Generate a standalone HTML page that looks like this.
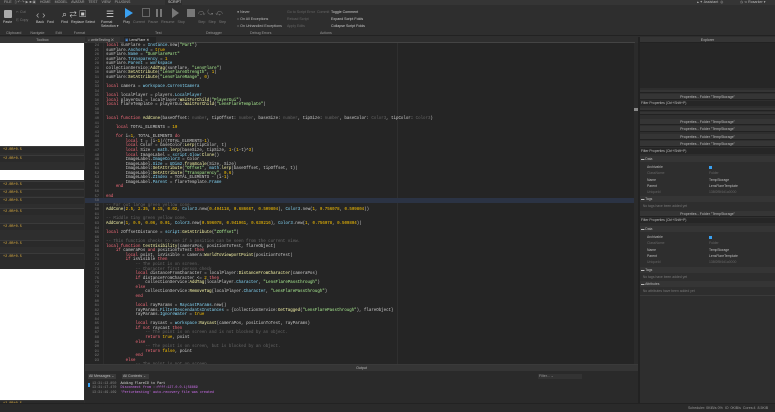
<!DOCTYPE html>
<html><head><meta charset="utf-8"><style>
*{margin:0;padding:0;box-sizing:border-box}
body{width:775px;height:412px;overflow:hidden;background:#2e2e2e;font-family:"Liberation Sans",sans-serif;color:#ccc;position:relative}
.a{position:absolute}
.t{font-size:3.6px;white-space:nowrap}
#code{position:absolute;left:106px;top:44px;font-family:"Liberation Mono",monospace;font-size:4.1px;line-height:4.56px;white-space:pre;color:#ccc}
#ln{position:absolute;left:87px;top:44px;font-family:"Liberation Mono",monospace;font-size:3.6px;line-height:4.56px;white-space:pre;color:#777;text-align:right;width:12px}
.k{color:#f86d7c}.s{color:#adf195}.n{color:#ffc600}.b{color:#84d6f7}.c{color:#666}.m{color:#fdfbac}
.row{position:absolute;left:0;width:84px;height:7px;background:#2a2a2a;border-top:1px solid #3a3a3a}
.row span{position:absolute;left:3px;top:1px;font-size:3.5px;color:#e0b040;font-family:"Liberation Mono",monospace}
.ph{position:absolute;left:640px;width:135px;height:6px;background:#353535;border-bottom:1px solid #222;font-size:3.6px;text-align:center;line-height:6px;color:#bbb}
.pr{position:absolute;left:640px;width:135px;font-size:3.4px;color:#bbb}
</style></head><body>
<div class="a" style="left:0;top:0;width:775px;height:5px;background:#353535"></div>
<div class="a t" style="left:4px;top:0;color:#aaa">FILE &nbsp; ▯ ↶ ↷ ▶ ■ ▣ &nbsp;&nbsp; HOME &nbsp;&nbsp; MODEL &nbsp;&nbsp; AVATAR &nbsp;&nbsp; TEST &nbsp;&nbsp; VIEW &nbsp;&nbsp; PLUGINS</div>
<div class="a" style="left:165px;top:0;width:17px;height:5px;background:#2e2e2e"></div>
<div class="a t" style="left:168px;top:0;color:#ddd">SCRIPT</div>
<div class="a t" style="left:697px;top:0;color:#bbb">▴ ✦ Assistant &nbsp;◎</div>
<div class="a t" style="left:740px;top:0;color:#bbb">◷ ⋖ Rosarker ▾</div>
<div class="a" style="left:0;top:5px;width:775px;height:31px;background:#2e2e2e;border-bottom:1px solid #222"></div>
<!-- ribbon icons -->
<div class="a" style="left:4px;top:10px;width:8px;height:8px;background:#aaa;border-radius:1px"></div>
<div class="a t" style="left:3px;top:20px;color:#ccc">Paste</div>
<div class="a t" style="left:16px;top:10px;color:#777">✂ Cut<br><br>⎘ Copy</div>
<div class="a" style="left:36px;top:10px;color:#aaa;font-size:10px">‹ ›</div>
<div class="a t" style="left:36px;top:20px">Back &nbsp;&nbsp;Fwd</div>
<div class="a" style="left:62px;top:9px;color:#ccc;font-size:9px">⌕ ⇄ ▣</div>
<div class="a t" style="left:61px;top:20px">Find &nbsp; Replace Select</div>
<div class="a" style="left:106px;top:9px;color:#ccc;font-size:9px">☰</div>
<div class="a t" style="left:101px;top:20px">Format<br>Selection ▾</div>
<div class="a" style="left:125px;top:8px;width:0;height:0;border-left:8px solid #3aa0f0;border-top:5px solid transparent;border-bottom:5px solid transparent"></div>
<div class="a" style="left:142px;top:8px;width:8px;height:9px;border:1px solid #666"></div>
<div class="a" style="left:156px;top:9px;width:2px;height:8px;background:#777"></div><div class="a" style="left:160px;top:9px;width:2px;height:8px;background:#777"></div>
<div class="a" style="left:172px;top:8px;width:0;height:0;border-left:7px solid #777;border-top:5px solid transparent;border-bottom:5px solid transparent"></div>
<div class="a" style="left:187px;top:9px;width:8px;height:8px;background:#777"></div>
<div class="a t" style="left:123px;top:20px;color:#bbb">Play &nbsp;&nbsp;<span style="color:#777">Current &nbsp;&nbsp;Pause &nbsp;&nbsp;Resume &nbsp;&nbsp;Stop</span></div>
<div class="a t" style="left:198px;top:10px;color:#777;font-size:7px">⤼ ⤿ ⤽</div>
<div class="a t" style="left:198px;top:20px;color:#777">Step &nbsp;&nbsp;Step &nbsp;&nbsp;Step</div>
<div class="a t" style="left:237px;top:9px;line-height:7px;color:#bbb">● Never<br>○ On All Exceptions<br>○ On Unhandled Exceptions</div>
<div class="a t" style="left:287px;top:9px;line-height:7px;color:#666">Go to Script Error &nbsp;Commit<br>Reload Script<br>Apply Edits</div>
<div class="a t" style="left:331px;top:9px;line-height:7px;color:#ccc">Toggle Comment<br>Expand Script Folds<br>Collapse Script Folds</div>
<div class="a t" style="left:6px;top:31px;color:#999">Clipboard &nbsp;&nbsp;&nbsp;&nbsp;&nbsp;&nbsp;&nbsp;&nbsp;Navigate &nbsp;&nbsp;&nbsp;&nbsp;&nbsp;&nbsp;&nbsp;&nbsp;&nbsp;&nbsp;Edit &nbsp;&nbsp;&nbsp;&nbsp;&nbsp;&nbsp;&nbsp;&nbsp;&nbsp;&nbsp;&nbsp;Format</div>
<div class="a t" style="left:155px;top:31px;color:#999">Test</div>
<div class="a t" style="left:206px;top:31px;color:#999">Debugger</div>
<div class="a t" style="left:250px;top:31px;color:#999">Debug Errors</div>
<div class="a t" style="left:320px;top:31px;color:#999">Actions</div>
<!-- toolbox -->
<div class="a" style="left:0;top:37px;width:85px;height:366px;background:#2e2e2e"></div>
<div class="a t" style="left:0;top:37px;width:85px;height:6px;background:#353535;text-align:center;color:#aaa;line-height:6px">Toolbox</div>
<div class="a" style="left:0;top:43px;width:84px;height:103px;background:#fff"></div>
<div class="row" style="top:146px"><span>+2.0B+0.5</span></div>
<div class="row" style="top:155px"><span>+2.0B+0.5</span></div>
<div class="a" style="left:0;top:170px;width:84px;height:10px;background:#fff"></div>
<div class="row" style="top:181px"><span>+2.0B+0.5</span></div>
<div class="row" style="top:189px"><span>+2.0B+0.5</span></div>
<div class="row" style="top:197px"><span>+2.0B+0.5</span></div>
<div class="row" style="top:208px"><span>+2.0B+0.5</span></div>
<div class="row" style="top:223px"><span>+2.0B+0.5</span></div>
<div class="row" style="top:240px"><span>+2.0B+0.5</span></div>
<div class="row" style="top:253px"><span>+2.0B+0.5</span></div>
<div class="a" style="left:0;top:269px;width:84px;height:131px;background:#fff"></div>
<div class="row" style="top:400px"><span>+2.0B+0.5</span></div>
<!-- tabs -->
<div class="a" style="left:85px;top:37px;width:550px;height:6px;background:#2e2e2e;border-bottom:1px solid #444"></div>
<div class="a t" style="left:87px;top:37px;width:33px;height:6px;background:#333;line-height:6px;color:#bbb">&nbsp;⌕ writeTesting ✕</div>
<div class="a t" style="left:124px;top:37px;width:32px;height:6px;background:#252525;line-height:6px;color:#ddd">&nbsp;<span style="color:#4a90e0">▣</span> LensFlare ✕</div>
<!-- editor -->
<div class="a" style="left:85px;top:43px;width:549px;height:321px;background:#252525"></div>
<div class="a" style="left:103px;top:43px;width:1px;height:321px;background:#2d2d2d"></div>
<div class="a" style="left:397px;top:43px;width:1px;height:321px;background:#2f2f2f"></div>
<div class="a" style="left:85px;top:198px;width:549px;height:5px;background:#2b3344"></div>
<div class="a" style="left:634px;top:43px;width:4px;height:321px;background:#2b2b2b"></div>
<div class="a" style="left:634px;top:108px;width:4px;height:3px;background:#888"></div>
<div id="ln">24
25
26
27
28
29
30
31
32
33
34
35
36
37
38
39
40
41
42
43
44
45
46
47
48
49
50
51
52
53
54
55
56
57
58
59
60
61
62
63
64
65
66
67
68
69
70
71
72
73
74
75
76
77
78
79
80
81
82
83
84
85
86
87
88
89
90
91
92
93</div>
<div id="code"><span class="k">local</span> sunFlare = <span class="b">Instance</span>.new(<span class="s">"Part"</span>)
sunFlare.<span class="b">Anchored</span> = <span class="n">true</span>
sunFlare.<span class="b">Name</span> = <span class="s">"SunFlarePart"</span>
sunFlare.<span class="b">Transparency</span> = <span class="n">1</span>
sunFlare.<span class="b">Parent</span> = <span class="b">workspace</span>
collectionService:<span class="m">AddTag</span>(sunFlare, <span class="s">"LensFlare"</span>)
sunFlare:<span class="m">SetAttribute</span>(<span class="s">"LensFlareStrength"</span>, <span class="n">1</span>)
sunFlare:<span class="m">SetAttribute</span>(<span class="s">"LensFlareRange"</span>, <span class="n">0</span>)

<span class="k">local</span> camera = <span class="b">workspace</span>.<span class="b">CurrentCamera</span>

<span class="k">local</span> localPlayer = players.<span class="b">LocalPlayer</span>
<span class="k">local</span> playerGui = localPlayer:<span class="m">WaitForChild</span>(<span class="s">"PlayerGui"</span>)
<span class="k">local</span> flareTemplate = playerGui:<span class="m">WaitForChild</span>(<span class="s">"LensFlareTemplate"</span>)


<span class="k">local</span> <span class="k">function</span> <span class="m">AddCone</span>(baseOffset: <span class="c">number</span>, tipOffset: <span class="c">number</span>, baseSize: <span class="c">number</span>, tipSize: <span class="c">number</span>, baseColor: <span class="c">Color3</span>, tipColor: <span class="c">Color3</span>)

    <span class="k">local</span> TOTAL_ELEMENTS = <span class="n">10</span>

    <span class="k">for</span> i=<span class="n">1</span>, TOTAL_ELEMENTS <span class="k">do</span>
        <span class="k">local</span> t = (i-<span class="n">1</span>)/(TOTAL_ELEMENTS-<span class="n">1</span>)
        <span class="k">local</span> Color = baseColor:<span class="m">Lerp</span>(tipColor, t)
        <span class="k">local</span> Size = <span class="b">math</span>.<span class="m">lerp</span>(baseSize, tipSize, <span class="n">1</span>-(<span class="n">1</span>-t)^<span class="n">3</span>)
        <span class="k">local</span> ImageLabel = <span class="b">script</span>.<span class="b">Glow</span>:<span class="m">Clone</span>()
        ImageLabel.<span class="b">ImageColor3</span> = Color
        ImageLabel.<span class="b">Size</span> = <span class="b">UDim2</span>.<span class="m">fromScale</span>(Size, Size)
        ImageLabel:<span class="m">SetAttribute</span>(<span class="s">"Offset"</span>, <span class="b">math</span>.<span class="m">lerp</span>(baseOffset, tipOffset, t))
        ImageLabel:<span class="m">SetAttribute</span>(<span class="s">"Transparency"</span>, <span class="n">0.6</span>)
        ImageLabel.<span class="b">ZIndex</span> = TOTAL_ELEMENTS - (i-<span class="n">1</span>)
        ImageLabel.<span class="b">Parent</span> = flareTemplate.<span class="b">Frame</span>
    <span class="k">end</span>

<span class="k">end</span>

<span class="c">-- Far out large green yellow cone.</span>
<span class="m">AddCone</span>(<span class="n">2.5</span>, <span class="n">2.35</span>, <span class="n">0.15</span>, <span class="n">0.02</span>, <span class="b">Color3</span>.new(<span class="n">0.494118</span>, <span class="n">0.686667</span>, <span class="n">0.509804</span>), <span class="b">Color3</span>.new(<span class="n">1</span>, <span class="n">0.756078</span>, <span class="n">0.509804</span>))

<span class="c">-- Middle tiny green yellow cone.</span>
<span class="m">AddCone</span>(<span class="n">1</span>, <span class="n">0.9</span>, <span class="n">0.06</span>, <span class="n">0.01</span>, <span class="b">Color3</span>.new(<span class="n">0.596078</span>, <span class="n">0.941961</span>, <span class="n">0.639216</span>), <span class="b">Color3</span>.new(<span class="n">1</span>, <span class="n">0.756078</span>, <span class="n">0.509804</span>))

<span class="k">local</span> zOffsetDistance = <span class="b">script</span>:<span class="m">GetAttribute</span>(<span class="s">"ZOffset"</span>)

<span class="c">-- This function checks to see if a position can be seen from the current view.</span>
<span class="k">local</span> <span class="k">function</span> <span class="m">testVisibility</span>(cameraPos, positionToTest, flareObject)
    <span class="k">if</span> cameraPos <span class="k">and</span> positionToTest <span class="k">then</span>
        <span class="k">local</span> point, isVisible = camera:<span class="m">WorldToViewportPoint</span>(positionToTest)
        <span class="k">if</span> isVisible <span class="k">then</span>
            <span class="c">-- The point is on screen.</span>
            <span class="c">-- Character first person check</span>
            <span class="k">local</span> distanceFromCharacter = localPlayer:<span class="m">DistanceFromCharacter</span>(cameraPos)
            <span class="k">if</span> distanceFromCharacter &lt;= <span class="n">2</span> <span class="k">then</span>
                collectionService:<span class="m">AddTag</span>(localPlayer.<span class="b">Character</span>, <span class="s">"LensFlarePassthrough"</span>)
            <span class="k">else</span>
                collectionService:<span class="m">RemoveTag</span>(localPlayer.<span class="b">Character</span>, <span class="s">"LensFlarePassthrough"</span>)
            <span class="k">end</span>

            <span class="k">local</span> rayParams = <span class="b">RaycastParams</span>.new()
            rayParams.<span class="b">FilterDescendantsInstances</span> = {collectionService:<span class="m">GetTagged</span>(<span class="s">"LensFlarePassthrough"</span>), flareObject}
            rayParams.<span class="b">IgnoreWater</span> = <span class="n">true</span>

            <span class="k">local</span> raycast = <span class="b">workspace</span>:<span class="m">Raycast</span>(cameraPos, positionToTest, rayParams)
            <span class="k">if</span> <span class="k">not</span> raycast <span class="k">then</span>
                <span class="c">-- The point is on screen and is not blocked by an object.</span>
                <span class="k">return</span> <span class="n">true</span>, point
            <span class="k">else</span>
                <span class="c">-- The point is on screen, but is blocked by an object.</span>
                <span class="k">return</span> <span class="n">false</span>, point
            <span class="k">end</span>
        <span class="k">else</span>
            <span class="c">-- The point is not on screen.</span></div>
<!-- output -->
<div class="a" style="left:85px;top:364px;width:553px;height:39px;background:#2a2a2a;border-top:1px solid #3a3a3a"></div>
<div class="a t" style="left:85px;top:365px;width:553px;height:6px;background:#353535;text-align:center;line-height:6px;color:#bbb">Output</div>
<div class="a t" style="left:88px;top:374px;width:28px;height:5px;background:#3a3a3a;line-height:5px;color:#bbb">&nbsp;All Messages ⌄</div>
<div class="a t" style="left:122px;top:374px;width:27px;height:5px;background:#3a3a3a;line-height:5px;color:#bbb">&nbsp;All Contexts ⌄</div>
<div class="a t" style="left:538px;top:374px;width:44px;height:5px;background:#333;line-height:5px;color:#999">&nbsp;Filter... ⌄</div>
<div class="a" style="left:88px;top:383px;width:2px;height:4px;background:#3aa0f0"></div>
<div class="a t" style="left:92px;top:382px;line-height:4.3px;font-family:'Liberation Mono',monospace;font-size:3.4px"><span style="color:#888">13:31:13.850</span> &nbsp;<span style="color:#ddd">Adding FlareID to Part</span><br><span style="color:#888">13:31:17.470</span> &nbsp;<span style="color:#d070f0">Disconnect from ::ffff:127.0.0.1|56869</span><br><span style="color:#888">13:31:49.169</span> &nbsp;<span style="color:#d070f0">'Perturbesting' auto-recovery file was created</span></div>
<!-- right panel -->
<div class="a" style="left:638px;top:37px;width:137px;height:366px;background:#2e2e2e;border-left:2px solid #222"></div>
<div class="ph" style="top:37px">Explorer</div>
<div class="a" style="left:640px;top:43px;width:135px;height:45px;background:#262626"></div>
<div class="ph" style="top:90px;height:3px"></div>
<div class="ph" style="top:94px">Properties - Folder "TempStorage"</div>
<div class="pr" style="top:101px;height:5px;background:#262626">&nbsp;Filter Properties (Ctrl+Shift+P)</div>
<div class="ph" style="top:108px;height:3px"></div>
<div class="ph" style="top:112px;height:3px"></div>
<div class="ph" style="top:119px">Properties - Folder "TempStorage"</div>
<div class="ph" style="top:126px">Properties - Folder "TempStorage"</div>
<div class="ph" style="top:134px">Properties - Folder "TempStorage"</div>
<div class="ph" style="top:141px">Properties - Folder "TempStorage"</div>
<div class="pr" style="top:148px;height:6px;background:#262626;line-height:6px">&nbsp;Filter Properties (Ctrl+Shift+P)</div>
<div class="pr" style="top:156px;height:6px;background:#353535;line-height:6px">&nbsp;▬ Data</div>
<div class="pr" style="top:164px;line-height:6.3px;padding-left:7px">Archivable<br><span style="color:#666">ClassName</span><br>Name<br>Parent<br><span style="color:#666">UniqueId</span></div>
<div class="a" style="left:709px;top:166px;width:3px;height:3px;background:#3aa0f0"></div>
<div class="pr" style="left:709px;width:60px;top:164px;line-height:6.3px"><br><span style="color:#666">Folder</span><br>TempStorage<br>LensFlareTemplate<br><span style="color:#666">138f2f5f4d1a0000</span></div>
<div class="pr" style="top:196px;height:6px;background:#353535;line-height:6px">&nbsp;▬ Tags</div>
<div class="pr" style="top:204px;line-height:5px;color:#777">&nbsp;&nbsp;&nbsp;No tags have been added yet</div>
<div class="ph" style="top:211px">Properties - Folder "TempStorage"</div>
<div class="pr" style="top:218px;height:5px;background:#262626">&nbsp;Filter Properties (Ctrl+Shift+P)</div>
<div class="pr" style="top:226px;height:6px;background:#353535;line-height:6px">&nbsp;▬ Data</div>
<div class="pr" style="top:234px;line-height:6.3px;padding-left:7px">Archivable<br><span style="color:#666">ClassName</span><br>Name<br>Parent<br><span style="color:#666">UniqueId</span></div>
<div class="a" style="left:709px;top:236px;width:3px;height:3px;background:#3aa0f0"></div>
<div class="pr" style="left:709px;width:60px;top:234px;line-height:6.3px"><br><span style="color:#666">Folder</span><br>TempStorage<br>LensFlareTemplate<br><span style="color:#666">138f2f5f4d1a0000</span></div>
<div class="pr" style="top:267px;height:6px;background:#353535;line-height:6px">&nbsp;▬ Tags</div>
<div class="pr" style="top:275px;line-height:5px;color:#777">&nbsp;&nbsp;&nbsp;No tags have been added yet</div>
<div class="pr" style="top:281px;height:6px;background:#353535;line-height:6px">&nbsp;▬ Attributes</div>
<div class="pr" style="top:289px;line-height:5px;color:#777">&nbsp;&nbsp;&nbsp;No attributes have been added yet</div>
<div class="a" style="left:640px;top:295px;width:135px;height:1px;background:#3a3a3a"></div>
<!-- status -->
<div class="a" style="left:0;top:403px;width:775px;height:9px;background:#2a2a2a;border-top:1px solid #222"></div>
<div class="a t" style="left:688px;top:406px;color:#999">Scheduler: 0KiB/s 0% &nbsp;IO &nbsp;0KiB/s &nbsp;Cores:4 &nbsp;8.5KiB</div>
</body></html>
